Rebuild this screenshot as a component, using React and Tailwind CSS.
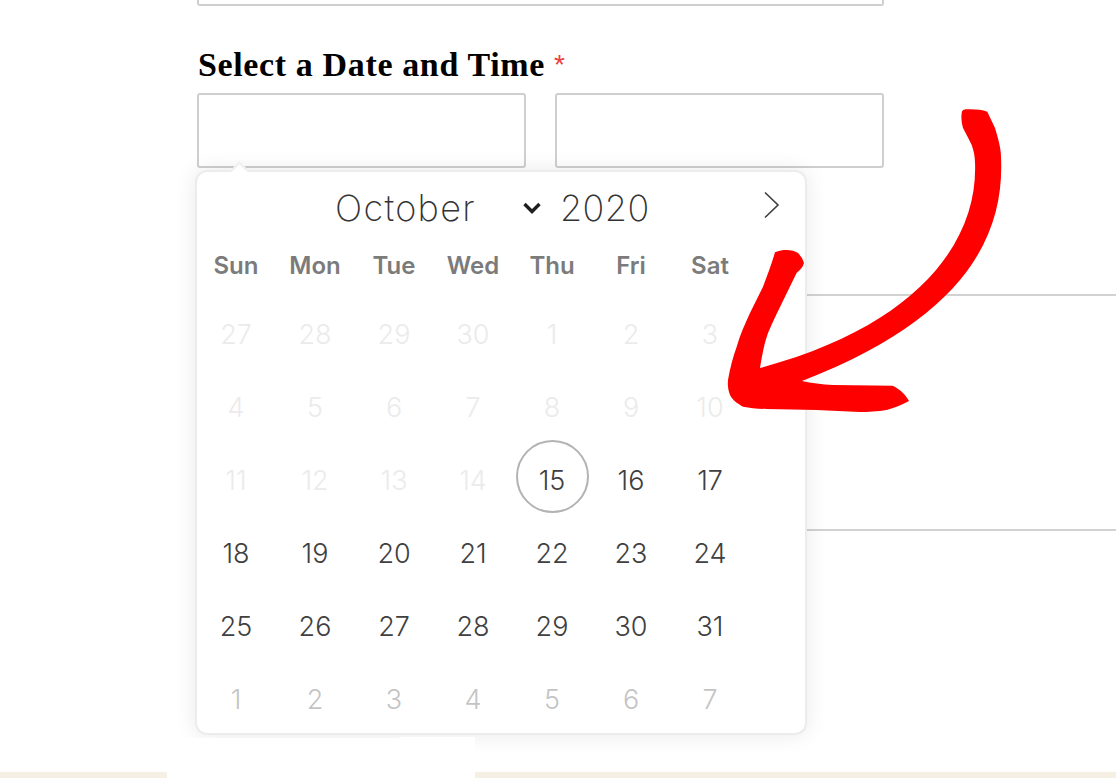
const weekDays = ['Sun', 'Mon', 'Tue', 'Wed', 'Thu', 'Fri', 'Sat']

const calendarDays = [
  ...[27, 28, 29, 30, 1, 2, 3, 4, 5, 6, 7, 8, 9, 10, 11, 12, 13, 14].map((label) => ({ label, tone: 'text-[#ebebeb]' })),
  ...Array.from({ length: 17 }, (_, i) => ({ label: i + 15, tone: 'text-[#404040]' })),
  ...[1, 2, 3, 4, 5, 6, 7].map((label) => ({ label, tone: 'text-[#c4c4c4]' })),
]

function DateField() {
  return <div className="h-[75px] flex-1 rounded-[3px] border-2 border-[#cfcfcf] bg-white" />
}

function CalendarPopup() {
  return (
    <div className="absolute left-[195px] top-[170px] h-[565px] w-[612px] rounded-[12px] border-2 border-[#ececec] bg-white font-['Inter',sans-serif] shadow-[0_0_22px_rgba(0,0,0,0.09)]">
      <div className="absolute -top-[8px] left-[36px] h-[13px] w-[13px] rotate-45 border-l-2 border-t-2 border-[#efefef] bg-white" />
      <div className="relative flex h-[72px] items-center pl-[138px] pr-[24px] text-[#333]">
        <span className="w-[188px] text-[36px] font-[250] leading-none tracking-[1.3px]">October</span>
        <svg width="20" height="14" viewBox="0 0 20 14" fill="none" className="mr-[18px] -translate-x-[1px]">
          <path d="M2.5 3 10 10.5 17.5 3" stroke="#1f1f1f" strokeWidth="3.4" />
        </svg>
        <span className="-ml-[1px] text-[36px] font-[250] leading-none tracking-[0.4px]">2020</span>
        <svg width="18" height="28" viewBox="0 0 18 28" fill="none" className="ml-auto -translate-y-[3px]">
          <path d="M2 1.5 15 14 2 26.5" stroke="#3d3d3d" strokeWidth="1.6" />
        </svg>
      </div>
      <div className="-ml-[0.5px] grid w-[553px] grid-cols-7 text-center">
        {weekDays.map((day) => (
          <div key={day} className="h-[44px] text-[24px] font-semibold leading-[44px] text-[#7b7b7b]">
            {day}
          </div>
        ))}
      </div>
      <div className="-ml-[0.5px] mt-[10px] grid w-[553px] grid-cols-7 text-center">
        {calendarDays.map((day, i) => (
          <div key={i} className={`relative flex h-[73px] items-center justify-center text-[27px] font-[350] leading-none ${day.tone}`}>
            {i === 18 ? <span className="absolute left-[3px] top-[-4px] h-[73px] w-[73px] rounded-full border-2 border-[#b3b3b3]" /> : null}
            {day.label}
          </div>
        ))}
      </div>
    </div>
  )
}

function HandArrow() {
  return (
    <svg className="absolute left-0 top-0" width="1116" height="778" viewBox="0 0 1116 778" fill="none">
      <path
        fill="#ff0000"
        d="M961.7 113 C962 110 964 109.3 966.7 109.3 C974 109 982 109.5 987.3 111.7 L995 128 C998 138 1001 148 1001 157 C1005 240 960 320 802 381 C811 383 822 384.5 833 385 L892.7 385.7 C896 387 899 389.5 901.7 391.7 C905 394.5 907 397.5 909 401 C902 405 894 408 886.7 410 C877 411.5 868 412 860 412 C845 411.5 831 410.5 816.7 410 L766.7 409 C758 408.8 750 408 743 406.7 C736 403 732 399 730 395 C728 390 727.5 385 728 380 C730 368 733 357 736.7 346.7 C740 335 745 324 750 313 L763 286.7 C767 276 772 263 775 252.3 C779 250.5 783 250 786.7 250 C791 250 795 251 798 253 C801 256 803 259.5 804 263 C803 267 800 270.5 796.7 272.7 L785 296.7 C779 309 773 321 768 333 C764 344 762 356 760 368 C920 325 978 240 975 163 C975 156 973.5 150 971.7 145 C969 139 966 134 963 128 C961.5 123 961 118 961.7 113 Z"
      />
    </svg>
  )
}

export default function App() {
  return (
    <div className="relative flex h-[778px] w-full flex-col overflow-hidden bg-white">
      <div className="ml-[197px] mr-[232px] h-[6px] rounded-b-[3px] border-x-2 border-b-2 border-[#cfcfcf]" />
      <h2 className="ml-[198px] mt-[41px] h-[36px] font-['Liberation_Serif',serif] text-[34px] font-bold leading-[36px] tracking-[0.63px] text-black">
        Select a Date and Time{' '}
        <span className="relative -top-[2px] font-['Liberation_Sans',sans-serif] text-[28px] font-normal tracking-normal text-[#ee3d3f]">*</span>
      </h2>
      <div className="ml-[197px] mr-[232px] mt-[10px] flex gap-[29px]">
        <DateField />
        <DateField />
      </div>
      <div className="ml-[197px] mt-[126px] h-[237px] w-[1000px] border-y-2 border-[#d2d2d2]" />
      <div className="mt-auto flex h-[6px]">
        <div className="w-[167px] bg-[#f6f0e4]" />
        <div className="w-[308px] bg-white" />
        <div className="flex-1 bg-[#f6f0e4]" />
      </div>
      <CalendarPopup />
      <div className="absolute bottom-0 left-[167px] top-[738px] w-[232px] bg-white" />
      <div className="absolute bottom-0 left-[399px] top-[737px] w-[76px] bg-white" />
      <HandArrow />
    </div>
  )
}
